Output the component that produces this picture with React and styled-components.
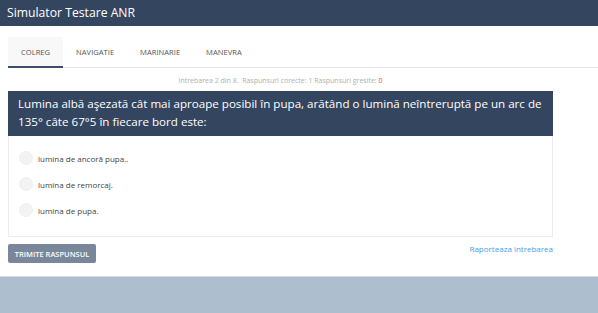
import React, { useState } from 'react'
import styled, { createGlobalStyle } from 'styled-components'

const GlobalStyle = createGlobalStyle`
  body {
    margin: 0;
    font-family: "Open Sans", "Noto Sans", sans-serif;
    background: #fff;
  }
`

const tabs = ['COLREG', 'NAVIGATIE', 'MARINARIE', 'MANEVRA']
const answers = ['lumina de ancoră pupa..', 'lumina de remorcaj.', 'lumina de pupa.']

const App = () => {
    const [active, setActive] = useState(0)
    const [picked, setPicked] = useState(null)
    return (
        <Page>
            <GlobalStyle />
            <Header>Simulator Testare ANR</Header>
            <Main>
                <Tabs>
                    {tabs.map((t, i) => (
                        <Tab key={t} $active={i === active} onClick={() => setActive(i)}>{t}</Tab>
                    ))}
                </Tabs>
                <Column>
                    <Status>
                        Intrebarea 2 din 8.&nbsp; Raspunsuri corecte: 1 Raspunsuri gresite: <Wrong>0</Wrong>
                    </Status>
                    <Question>
                        Lumina albă aşezată cât mai aproape posibil în pupa, arătând o lumină neîntreruptă pe un arc de 135° câte 67°5 în fiecare bord este:
                    </Question>
                    <Answers>
                        {answers.map((a, i) => (
                            <Option key={a} onClick={() => setPicked(i)}>
                                <Radio $checked={picked === i} />
                                {a}
                            </Option>
                        ))}
                    </Answers>
                    <Actions>
                        <Button>TRIMITE RASPUNSUL</Button>
                        <Report href="#">Raporteaza intrebarea</Report>
                    </Actions>
                </Column>
            </Main>
            <Footer />
        </Page>
    )
}

export default App

const Page = styled.div`
    width: 100%;
    min-height: 313px;
    display: flex;
    flex-direction: column;
`
const Header = styled.div`
    height: 26px;
    background-color: #34465f;
    color: #fff;
    font-size: 12.2px;
    line-height: 26px;
    padding-left: 7px;
`
const Main = styled.div`
    padding: 11px 0 13px 8px;
`
const Tabs = styled.div`
    display: flex;
    border-bottom: 1px solid #e6e6e6;
`
const Tab = styled.div`
    height: 29px;
    padding: 0 13px;
    display: flex;
    align-items: center;
    font-size: 7.6px;
    color: #555;
    cursor: pointer;
    background-color: ${p => (p.$active ? '#f8f8f8' : 'transparent')};
    border-bottom: 2px solid ${p => (p.$active ? '#3b4d67' : 'transparent')};
    margin-bottom: -1px;
`
const Column = styled.div`
    width: 545px;
`
const Status = styled.div`
    text-align: center;
    font-size: 7px;
    color: #b0b0b0;
    padding: 7px 0 4px;
    line-height: 12px;
`
const Wrong = styled.span`
    color: #f03c3c;
`
const Question = styled.div`
    background-color: #34465f;
    color: #fff;
    font-size: 11.6px;
    line-height: 18px;
    padding: 4px 6px 5px 10px;
`
const Answers = styled.div`
    border: 1px solid #ececec;
    border-top: none;
    padding: 15px 10px 19px;
    display: flex;
    flex-direction: column;
    gap: 12px;
`
const Option = styled.label`
    display: flex;
    align-items: center;
    gap: 5px;
    font-size: 8px;
    color: #444;
    cursor: pointer;
    height: 14px;
`
const Radio = styled.span`
    width: 14px;
    height: 14px;
    border-radius: 50%;
    background-color: ${p => (p.$checked ? '#34465f' : '#f3f3f3')};
    border: 1px solid #f0f0f0;
    box-sizing: border-box;
`
const Actions = styled.div`
    display: flex;
    justify-content: space-between;
    align-items: flex-start;
    padding-top: 7px;
`
const Button = styled.div`
    width: 88px;
    height: 19px;
    background-color: #7a8699;
    color: #fff;
    font-size: 7.5px;
    font-weight: 600;
    border-radius: 2px;
    display: flex;
    justify-content: center;
    align-items: center;
    cursor: pointer;
`
const Report = styled.a`
    font-size: 8px;
    color: #3ea3ea;
    text-decoration: none;
    line-height: 10px;
`
const Footer = styled.div`
    flex: 1;
    background-color: #adbfcf;
    border-top: 1px solid #d4dde6;
`
